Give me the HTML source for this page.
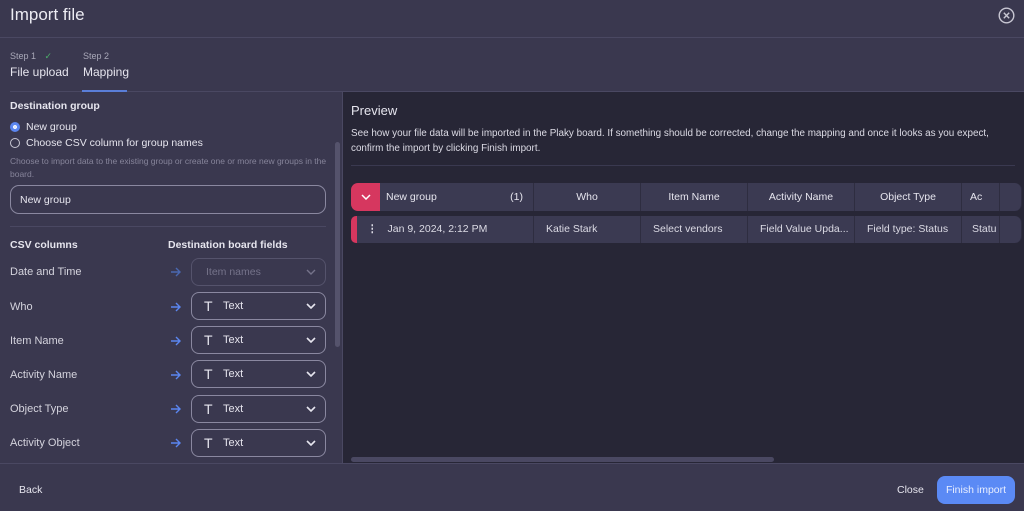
<!DOCTYPE html>
<html><head><meta charset="utf-8"><style>
*{margin:0;padding:0;box-sizing:border-box}
body{width:1024px;height:511px;background:#3a384f;font-family:"Liberation Sans",sans-serif;color:#e6e5ee;position:relative;overflow:hidden;font-size:11px}
.a{position:absolute;white-space:nowrap}
.line{position:absolute;height:1px;background:#4a4862}
.sel{position:absolute;left:191px;width:135px;height:28px;border:1px solid #8a88a0;border-radius:8px}
.sel .t{position:absolute;left:12px;top:5px;font-size:14px;color:#e6e5ee}
.sel .x{position:absolute;left:31px;top:7px;font-size:11px}
.sel svg{position:absolute;right:9px;top:10px}
.arr{position:absolute;left:170px}
.lab{position:absolute;left:10px;font-size:11px;color:#d4d3dd}
.th{position:absolute;top:183px;height:28px;background:#3b3a52;font-size:10.5px;color:#e6e5ee;text-align:center;line-height:28px;border-right:1px solid #2e2d40}
.td{position:absolute;top:216px;height:27px;background:#3b3a52;font-size:10.5px;color:#dcdbe5;line-height:27px;padding-left:12px;border-right:1px solid #2e2d40;overflow:hidden}
</style></head><body>
<div class="a" style="left:10px;top:5px;font-size:17px;color:#ecebf2">Import file</div>
<svg class="a" style="left:998px;top:7px" width="17" height="17" viewBox="0 0 17 17"><circle cx="8.5" cy="8.5" r="7.3" fill="none" stroke="#c8c7d3" stroke-width="1.4"/><path d="M5.8 5.8l5.4 5.4M11.2 5.8l-5.4 5.4" stroke="#c8c7d3" stroke-width="1.4"/></svg>
<div class="line" style="left:0;top:37px;width:1024px"></div>
<div class="a" style="left:10px;top:51px;font-size:9px;color:#a9a8b8">Step 1 <span style="color:#4caf6a;margin-left:6px">✓</span></div>
<div class="a" style="left:83px;top:51px;font-size:9px;color:#a9a8b8">Step 2</div>
<div class="a" style="left:10px;top:65px;font-size:12px">File upload</div>
<div class="a" style="left:83px;top:65px;font-size:12px">Mapping</div>
<div class="line" style="left:10px;top:91px;width:1014px"></div>
<div class="a" style="left:82px;top:90px;width:45px;height:2px;background:#5a7ed8"></div>
<div class="a" style="left:10px;top:100px;font-size:10.5px;font-weight:bold">Destination group</div>
<div class="a" style="left:10px;top:122px;width:10px;height:10px;border-radius:50%;background:#5b86f0;border:3px solid #5b86f0;box-shadow:inset 0 0 0 1.5px #fff"></div>
<div class="a" style="left:26px;top:121px;font-size:10.5px">New group</div>
<div class="a" style="left:10px;top:138px;width:10px;height:10px;border-radius:50%;border:1px solid #c8c7d3"></div>
<div class="a" style="left:26px;top:137px;font-size:10.5px">Choose CSV column for group names</div>
<div class="a" style="left:10px;top:155px;font-size:8.5px;color:#86849a;line-height:13px;white-space:normal;width:320px">Choose to import data to the existing group or create one or more new groups in the board.</div>
<div class="a" style="left:10px;top:185px;width:316px;height:29px;border:1px solid #8a88a0;border-radius:9px"></div>
<div class="a" style="left:20px;top:194px;font-size:10.5px">New group</div>
<div class="line" style="left:10px;top:226px;width:316px"></div>
<div class="a" style="left:10px;top:239px;font-size:10.5px;font-weight:bold">CSV columns</div>
<div class="a" style="left:168px;top:239px;font-size:10.5px;font-weight:bold">Destination board fields</div>
<div class="lab" style="top:266px">Date and Time</div>
<div class="lab" style="top:301px">Who</div>
<div class="lab" style="top:335px">Item Name</div>
<div class="lab" style="top:369px">Activity Name</div>
<div class="lab" style="top:403px">Object Type</div>
<div class="lab" style="top:437px">Activity Object</div>
<svg class="arr" style="top:266px" width="12" height="12" viewBox="0 0 12 12"><path d="M1 6h9M6 2l4 4-4 4" fill="none" stroke="#4a68b0" stroke-width="1.4"/></svg>
<div class="sel" style="top:258px;border-color:#55536c"><span class="a" style="left:14px;top:7px;font-size:10.5px;color:#75738a">Item names</span><svg width="10" height="6" viewBox="0 0 10 6"><path d="M1 1l4 4 4-4" fill="none" stroke="#75738a" stroke-width="1.4"/></svg></div>
<svg class="arr" style="top:301px" width="12" height="12" viewBox="0 0 12 12"><path d="M1 6h9M6 2l4 4-4 4" fill="none" stroke="#5b86f0" stroke-width="1.4"/></svg>
<div class="sel" style="top:292px"><span class="t">T</span><span class="x" style="position:absolute">Text</span><svg width="10" height="6" viewBox="0 0 10 6"><path d="M1 1l4 4 4-4" fill="none" stroke="#e6e5ee" stroke-width="1.6"/></svg></div>
<svg class="arr" style="top:335px" width="12" height="12" viewBox="0 0 12 12"><path d="M1 6h9M6 2l4 4-4 4" fill="none" stroke="#5b86f0" stroke-width="1.4"/></svg>
<div class="sel" style="top:326px"><span class="t">T</span><span class="x" style="position:absolute">Text</span><svg width="10" height="6" viewBox="0 0 10 6"><path d="M1 1l4 4 4-4" fill="none" stroke="#e6e5ee" stroke-width="1.6"/></svg></div>
<svg class="arr" style="top:369px" width="12" height="12" viewBox="0 0 12 12"><path d="M1 6h9M6 2l4 4-4 4" fill="none" stroke="#5b86f0" stroke-width="1.4"/></svg>
<div class="sel" style="top:360px"><span class="t">T</span><span class="x" style="position:absolute">Text</span><svg width="10" height="6" viewBox="0 0 10 6"><path d="M1 1l4 4 4-4" fill="none" stroke="#e6e5ee" stroke-width="1.6"/></svg></div>
<svg class="arr" style="top:403px" width="12" height="12" viewBox="0 0 12 12"><path d="M1 6h9M6 2l4 4-4 4" fill="none" stroke="#5b86f0" stroke-width="1.4"/></svg>
<div class="sel" style="top:395px"><span class="t">T</span><span class="x" style="position:absolute">Text</span><svg width="10" height="6" viewBox="0 0 10 6"><path d="M1 1l4 4 4-4" fill="none" stroke="#e6e5ee" stroke-width="1.6"/></svg></div>
<svg class="arr" style="top:437px" width="12" height="12" viewBox="0 0 12 12"><path d="M1 6h9M6 2l4 4-4 4" fill="none" stroke="#5b86f0" stroke-width="1.4"/></svg>
<div class="sel" style="top:429px"><span class="t">T</span><span class="x" style="position:absolute">Text</span><svg width="10" height="6" viewBox="0 0 10 6"><path d="M1 1l4 4 4-4" fill="none" stroke="#e6e5ee" stroke-width="1.6"/></svg></div>
<div class="a" style="left:335px;top:142px;width:5px;height:205px;border-radius:3px;background:#55536c"></div>
<div class="a" style="left:342px;top:92px;width:682px;height:371px;background:#272636;border-left:1px solid #4a4862"></div>
<div class="a" style="left:351px;top:103px;font-size:13px">Preview</div>
<div class="a" style="left:351px;top:126px;font-size:9.9px;line-height:15px;color:#dcdbe5">See how your file data will be imported in the Plaky board. If something should be corrected, change the mapping and once it looks as you expect,<br>confirm the import by clicking Finish import.</div>
<div class="line" style="left:351px;top:165px;width:664px;background:#3a3950"></div>
<div class="a" style="left:351px;top:183px;width:30px;height:28px;background:#d6375f;border-radius:7px 0 0 7px"></div>
<svg class="a" style="left:361px;top:194px" width="10" height="6" viewBox="0 0 10 6"><path d="M1 1l4 4 4-4" fill="none" stroke="#fff" stroke-width="1.5"/></svg>
<div class="th" style="left:380px;width:154px;text-align:left;padding-left:6px">New group<span style="position:absolute;right:10px">(1)</span></div>
<div class="th" style="left:534px;width:107px">Who</div>
<div class="th" style="left:641px;width:107px">Item Name</div>
<div class="th" style="left:748px;width:107px">Activity Name</div>
<div class="th" style="left:855px;width:107px">Object Type</div>
<div class="th" style="left:962px;width:38px;text-align:left;padding-left:8px">Ac</div>
<div class="th" style="left:1000px;width:22px;border-radius:0 7px 7px 0"></div>
<div class="a" style="left:351px;top:216px;width:6px;height:27px;background:#d6375f;border-radius:5px 0 0 5px"></div>
<div class="td" style="left:357px;width:177px;padding-left:10px"><span style="font-weight:bold;margin-right:10px">⋮</span>Jan 9, 2024, 2:12 PM</div>
<div class="td" style="left:534px;width:107px">Katie Stark</div>
<div class="td" style="left:641px;width:107px">Select vendors</div>
<div class="td" style="left:748px;width:107px">Field Value Upda...</div>
<div class="td" style="left:855px;width:107px">Field type: Status</div>
<div class="td" style="left:962px;width:38px;padding-left:10px">Statu</div>
<div class="td" style="left:1000px;width:22px;border-radius:0 7px 7px 0"></div>
<div class="a" style="left:351px;top:457px;width:423px;height:5px;border-radius:3px;background:#4a4862"></div>
<div class="line" style="left:0;top:463px;width:1024px"></div>
<div class="a" style="left:19px;top:484px;font-size:10.5px">Back</div>
<div class="a" style="left:897px;top:484px;font-size:10.5px">Close</div>
<div class="a" style="left:937px;top:476px;width:78px;height:28px;border-radius:8px;background:#5b8af5;color:#e8eeff;font-size:10.5px;text-align:center;line-height:28px">Finish import</div>
</body></html>
